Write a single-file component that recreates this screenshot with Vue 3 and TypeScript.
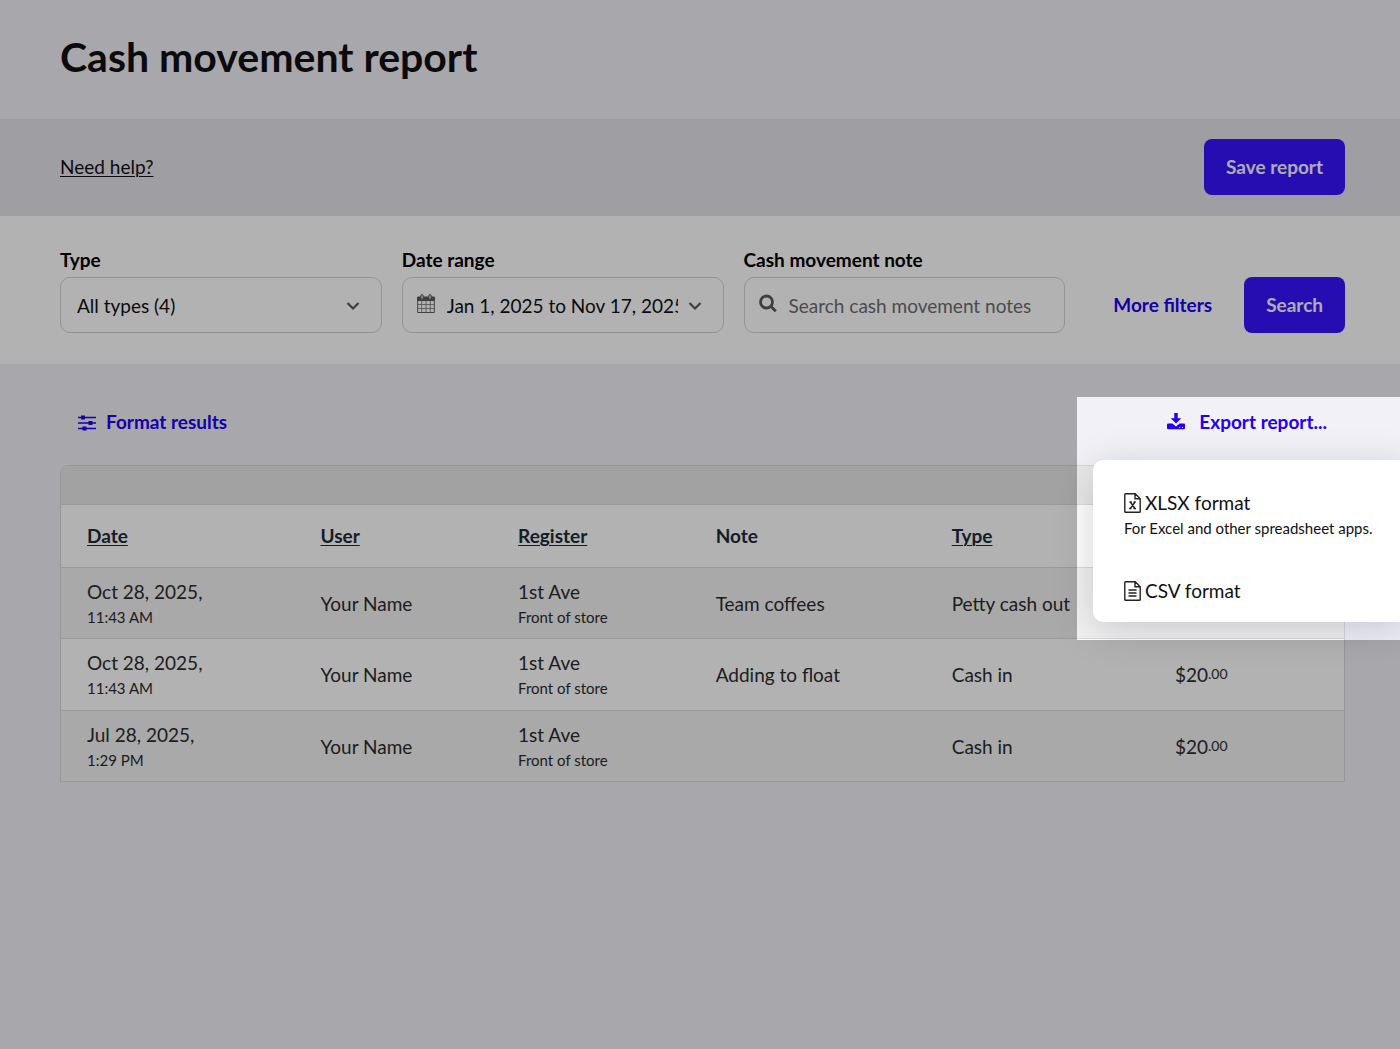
<script setup lang="ts">
import { ref } from 'vue'

interface Movement {
  date: string
  time: string
  user: string
  outlet: string
  register: string
  note: string
  type: string
  dollars: string
  cents: string
}

const columns = [
  { label: 'Date', sortable: true },
  { label: 'User', sortable: true },
  { label: 'Register', sortable: true },
  { label: 'Note', sortable: false },
  { label: 'Type', sortable: true },
]

const movements: Movement[] = [
  { date: 'Oct 28, 2025,', time: '11:43 AM', user: 'Your Name', outlet: '1st Ave', register: 'Front of store', note: 'Team coffees', type: 'Petty cash out', dollars: '', cents: '' },
  { date: 'Oct 28, 2025,', time: '11:43 AM', user: 'Your Name', outlet: '1st Ave', register: 'Front of store', note: 'Adding to float', type: 'Cash in', dollars: '$20', cents: '.00' },
  { date: 'Jul 28, 2025,', time: '1:29 PM', user: 'Your Name', outlet: '1st Ave', register: 'Front of store', note: '', type: 'Cash in', dollars: '$20', cents: '.00' },
]

const dateRange = ref('Jan 1, 2025 to Nov 17, 2025')
const noteQuery = ref('')
</script>

<template>
  <div class="page">
    <header class="title-bar">
      <h1>Cash movement report</h1>
    </header>

    <section class="action-bar">
      <a class="help" href="#">Need help?</a>
      <button class="btn primary" type="button">Save report</button>
    </section>

    <form class="filters" @submit.prevent>
      <div class="field">
        <label for="type">Type</label>
        <div class="control">
          <select id="type">
            <option>All types (4)</option>
          </select>
          <svg class="chevron" viewBox="0 0 14 10" aria-hidden="true"><path d="M1.500 2l5.500 5.500 5.500-5.500" /></svg>
        </div>
      </div>
      <div class="field">
        <label for="range">Date range</label>
        <div class="control with-icon">
          <svg class="calendar" viewBox="0 0 18 20" aria-hidden="true">
            <path class="body" d="M.7 3.500h16.600v15H.7z" />
            <path class="head" d="M.5 3h17v3.500H.5z" />
            <path class="grid" d="M1 10.500h16M1 14.500h16M4.700 7v11.500M9 7v11.500M13.300 7v11.500" />
            <path class="ring" d="M3.800 1.800a1.200 1.200 0 0 1 2.400 0v2.400a1.200 1.200 0 0 1-2.400 0zM11.800 1.800a1.200 1.200 0 0 1 2.400 0v2.400a1.200 1.200 0 0 1-2.400 0z" />
          </svg>
          <input id="range" v-model="dateRange" type="text" />
          <svg class="chevron" viewBox="0 0 14 10" aria-hidden="true"><path d="M1.500 2l5.500 5.500 5.500-5.500" /></svg>
        </div>
      </div>
      <div class="field">
        <label for="note">Cash movement note</label>
        <div class="control with-icon">
          <svg class="magnifier" viewBox="0 0 18 20" aria-hidden="true">
            <circle cx="7.500" cy="8" r="6" />
            <path d="M12 12.500l4.800 4.800" />
          </svg>
          <input id="note" v-model="noteQuery" type="text" placeholder="Search cash movement notes" />
        </div>
      </div>
      <div class="filter-actions">
        <button class="btn plain" type="button">More filters</button>
        <button class="btn primary" type="submit">Search</button>
      </div>
    </form>

    <main class="results">
      <div class="toolbar">
        <button class="btn plain tool" type="button">
          <svg class="sliders" viewBox="0 0 18 16" aria-hidden="true">
            <path class="line" d="M0 2.500h18M0 8h18M0 13.500h18" />
            <path d="M3 .5h4v4H3zM10.500 6h4v4h-4zM4.500 11.500h4v4h-4z" />
          </svg>
          Format results
        </button>
        <div class="export">
          <button class="btn plain tool export-button" type="button">
            <svg class="download" viewBox="0 0 18 18" aria-hidden="true">
              <path fill-rule="evenodd" d="M7.300 0h3.400v5.200h3.600L9 10.500 3.700 5.200h3.600zM1.200 10.500h4.300L9 13.500l3.500-3h4.300q1.200 0 1.200 1.200v3.300q0 1.200-1.200 1.200H1.200Q0 16.200 0 15v-3.300q0-1.200 1.200-1.200zM12.200 13.900v1h1v-1zM15 13.900v1h1v-1z" />
            </svg>
            Export report...
          </button>
          <div class="menu">
            <button class="menu-item" type="button">
              <span class="menu-title">
                <svg class="file" viewBox="0 0 17 20" aria-hidden="true">
                  <path d="M.8 1.500q0-.8.800-.8h9.600l5 5v12.800q0 .8-.8.800H1.600q-.8 0-.8-.8zM11 .8v5h5" />
                  <path d="M5.400 9h2.400M9.600 9h2.200M5 15.500h2.400M9.400 15.500h2.600M6.400 9l4.400 6.500M11 9l-4.600 6.500" />
                </svg>
                XLSX format
              </span>
              <span class="menu-hint">For Excel and other spreadsheet apps.</span>
            </button>
            <button class="menu-item" type="button">
              <span class="menu-title">
                <svg class="file" viewBox="0 0 17 20" aria-hidden="true">
                  <path d="M.8 1.500q0-.8.800-.8h9.600l5 5v12.800q0 .8-.8.800H1.600q-.8 0-.8-.8zM11 .8v5h5M4.500 9h8M4.500 12h8M4.500 15h8" />
                </svg>
                CSV format
              </span>
            </button>
          </div>
          <div class="spotlight" aria-hidden="true"></div>
        </div>
      </div>

      <div class="panel">
        <div class="panel-strip"></div>
        <table>
          <thead>
            <tr>
              <th v-for="column in columns" :key="column.label" scope="col">
                <a v-if="column.sortable" href="#">{{ column.label }}</a>
                <template v-else>{{ column.label }}</template>
              </th>
              <td></td>
            </tr>
          </thead>
          <tbody>
            <tr v-for="(movement, index) in movements" :key="index">
              <td>
                <div class="main-line">{{ movement.date }}</div>
                <div class="sub-line">{{ movement.time }}</div>
              </td>
              <td>{{ movement.user }}</td>
              <td>
                <div class="main-line">{{ movement.outlet }}</div>
                <div class="sub-line">{{ movement.register }}</div>
              </td>
              <td>{{ movement.note }}</td>
              <td>{{ movement.type }}</td>
              <td><span class="amount">{{ movement.dollars }}<span class="cents">{{ movement.cents }}</span></span></td>
            </tr>
          </tbody>
        </table>
      </div>
    </main>
  </div>
</template>

<style>
body {
  margin: 0;
}
</style>

<style scoped>
.page {
  position: relative;
  min-height: 100vh;
  overflow: hidden;
  background: #f1f1f7;
  color: #111113;
  font-family: Lato, sans-serif;
  font-size: 19px;
  line-height: 28px;
}

.page * {
  box-sizing: border-box;
}

.title-bar {
  padding: 31px 55px 36px 60px;
}

h1 {
  margin: 0;
  font-size: 41px;
  line-height: 52px;
  font-weight: 700;
}

.action-bar {
  display: flex;
  align-items: center;
  justify-content: space-between;
  padding: 20px 55px 21px 60px;
  background: #e4e3e8;
}

.help {
  color: inherit;
  text-decoration-thickness: 1px;
  text-underline-offset: 2px;
}

.btn {
  height: 56px;
  padding: 0 22px;
  border: 0;
  border-radius: 8px;
  font: inherit;
  font-weight: 700;
  white-space: nowrap;
}

.primary {
  background: #3613ff;
  color: #f8f6ff;
}

.plain {
  background: none;
  color: #2300f0;
}

.filters {
  display: flex;
  align-items: flex-end;
  gap: 20px;
  padding: 31px 55px 31px 60px;
  background: #fff;
}

.field {
  flex: 1;
  min-width: 0;
}

.field label {
  display: block;
  height: 30px;
  line-height: 26px;
  font-weight: 700;
  color: #000;
}

.control {
  display: flex;
  align-items: center;
  height: 56px;
  padding: 0 21px 0 16px;
  border: 1px solid #d2d2d6;
  border-radius: 10px;
}

.with-icon {
  padding-left: 14px;
}

.control select,
.control input {
  flex: 1;
  min-width: 0;
  height: 40px;
  padding: 0;
  border: 0;
  background: none;
  appearance: none;
  outline: 0;
  font: inherit;
  color: #111113;
}

.control select {
  padding-top: 2px;
}

.control input::placeholder {
  color: #6c6c70;
  opacity: 1;
}

.control svg {
  flex: none;
  fill: none;
  stroke: #5a5a5e;
}

.chevron {
  width: 14px;
  height: 10px;
  margin: 2px 0 0 10px;
  stroke-width: 2.2;
}

.control .calendar,
.control .magnifier {
  width: 18px;
  height: 20px;
  margin: 0 12px 2px 0;
}

.magnifier {
  stroke-width: 2.8;
}

.calendar .head {
  fill: #5a5a5e;
}

.calendar .grid {
  stroke: #88888c;
}

.calendar .ring {
  fill: #ddd;
}

.filter-actions {
  display: flex;
  gap: 10px;
  padding-left: 6px;
}

.results {
  padding: 30px 55px 40px 60px;
}

.toolbar {
  display: flex;
  justify-content: space-between;
  margin-bottom: 15px;
}

.tool {
  display: flex;
  align-items: center;
  gap: 10px;
  padding: 0 18px;
}

.export-button {
  gap: 14px;
}

.sliders {
  width: 18px;
  height: 16px;
  margin-top: 2px;
  fill: currentColor;
}

.sliders .line {
  stroke: currentColor;
  stroke-width: 1.5;
}

.download {
  width: 18px;
  height: 18px;
  fill: currentColor;
}

.export {
  position: relative;
}

.menu {
  position: absolute;
  z-index: 2;
  top: 66px;
  right: -64px;
  width: 316px;
  padding: 29px 30px 17px;
  border-radius: 10px;
  background: #fff;
  box-shadow: 0 8px 40px rgba(0, 0, 40, 0.18);
}

.menu-item {
  display: block;
  width: 100%;
  margin: 0 0 38px;
  padding: 0 1px;
  border: 0;
  background: none;
  font: inherit;
  color: #111113;
  text-align: left;
  white-space: nowrap;
}

.menu-item:last-child {
  margin: 0;
}

.menu-title {
  display: flex;
  align-items: center;
  gap: 4px;
}

.file {
  width: 17px;
  height: 20px;
  fill: none;
  stroke: #222;
  stroke-width: 1.4;
}

.menu-hint {
  display: block;
  font-size: 15px;
  line-height: 22px;
}

/* Dims everything outside the export menu */
.spotlight {
  position: absolute;
  z-index: 3;
  top: 3px;
  right: -80px;
  width: 348px;
  height: 243px;
  box-shadow: 0 0 0 2000px rgba(0, 0, 0, 0.3);
  pointer-events: none;
}

.panel {
  overflow: hidden;
  border: 1px solid #d8d8da;
  border-radius: 8px 8px 0 0;
  background: #fff;
}

.panel-strip {
  height: 39px;
  border-bottom: 1px solid #dcdcdc;
  background: #e9e9e9;
}

table {
  width: 100%;
  table-layout: fixed;
  border-collapse: collapse;
}

th {
  height: 62px;
  padding: 0 0 0 26px;
  text-align: left;
  font-weight: 700;
  color: #1d2c3b;
}

th:nth-child(1) {
  width: 18.2%;
}

th:nth-child(2),
th:nth-child(3) {
  width: 15.4%;
}

th:nth-child(4) {
  width: 18.4%;
}

th:nth-child(5) {
  width: 17.4%;
}

th a {
  color: inherit;
  text-decoration-thickness: 1px;
  text-underline-offset: 2px;
}

tbody td {
  height: 71px;
  padding: 2px 0 0 26px;
  border-top: 1px solid #dcdcdc;
  color: #2c2c2e;
}

tbody tr:nth-child(2) td {
  height: 72px;
}

tbody tr:nth-child(odd) {
  background: #f2f2f2;
}

.sub-line {
  padding-bottom: 2px;
  font-size: 15px;
  line-height: 22px;
}

.amount {
  display: flex;
}

.cents {
  font-size: 14px;
  line-height: 26px;
}
</style>
